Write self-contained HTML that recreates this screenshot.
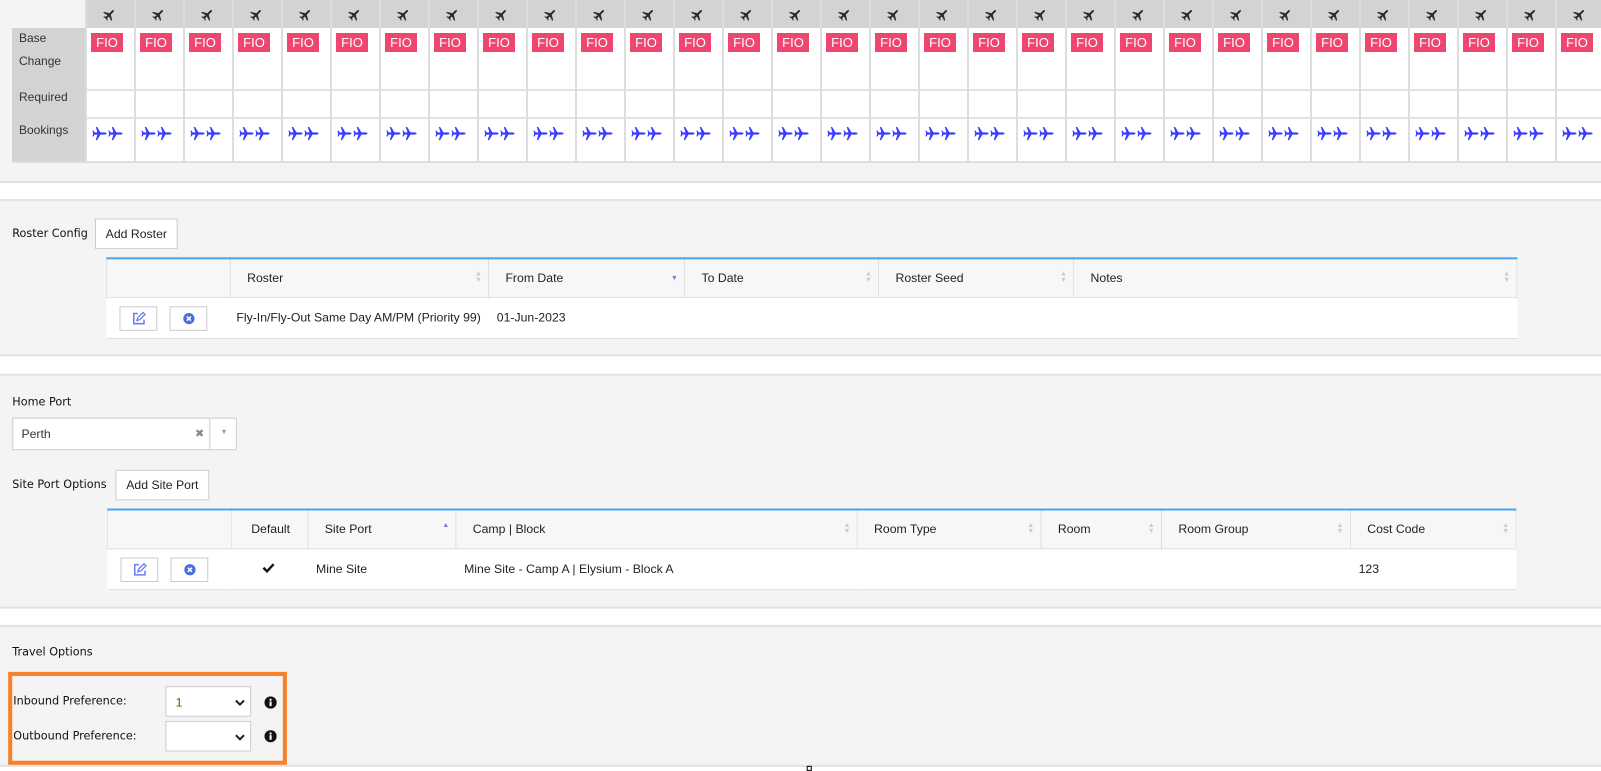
<!DOCTYPE html>
<html><head><meta charset="utf-8"><style>
*{box-sizing:border-box;margin:0;padding:0}
body{width:1601px;height:769px;overflow:hidden;background:#fff;font-family:"Liberation Sans",Arial,sans-serif;font-size:12px;color:#222;position:relative}
.sec{position:absolute;left:0;width:1568px;background:#f4f4f4;border-top:2px solid #e2e2e2;border-bottom:2px solid #e2e2e2}
.lbl{position:absolute;font-family:"DejaVu Sans",sans-serif;font-size:11px;color:#111}
.grid{position:absolute;left:12px;top:0;width:1589px;height:163px;overflow:hidden;display:flex;border-bottom:2px solid #ddd}
.lab{width:73px;flex:none;background:#d3d3d3;margin-top:28px;height:135px;position:relative;font-size:12px;color:#333}
.lab div{position:absolute;left:7px}
.col{width:49px;flex:none;border-left:2px solid #ddd;background:#fff;position:relative;height:163px}
.col .h{height:28px;background:#d3d3d3;position:relative;overflow:hidden}
.col .h i{position:absolute;left:10px;top:-11px;font-style:normal;font-weight:bold;font-size:12px;color:#222;letter-spacing:1px}
.col .h svg{position:absolute;left:16px;top:8px}
.col .b{height:63px;border-bottom:2px solid #e2e2e2;position:relative}
.col .b span{position:absolute;left:4px;top:5px;background:#ee466f;color:#fff;font-size:13px;padding:1px 0;line-height:17px;width:32px;text-align:center}
.col .r{height:28px;border-bottom:2px solid #e2e2e2}
.col .k{position:relative}
.col .k svg{position:absolute;top:7px}
.btn{position:absolute;background:#fff;border:1px solid #ccc;font-size:12px;color:#222;text-align:center}
table{position:absolute;border-collapse:collapse;background:#fff;border-top:2px solid #4aa3ef;table-layout:fixed}
th{background:#f7f7f7;font-weight:normal;text-align:left;font-size:12px;color:#222;border:1px solid #ddd;border-top:none;padding-left:16px;position:relative}
td{font-size:12px;color:#222;padding-left:8px;border-bottom:1px solid #ddd;position:relative}
.s{position:absolute;right:6px;top:12px;color:#ccc;font-size:7px;line-height:6px}
.ib{position:absolute;width:37px;height:24px;border:1px solid #ccc;background:#fff;top:8px}
.sel{position:absolute;background:#fff;border:1px solid #ccc;width:84px;height:30px;font-size:12px}
</style></head><body>
<svg width="0" height="0" style="position:absolute"><defs><path id="pl" d="M15.5 8 C15.5 7 14 6.8 12 6.8 L9 6.8 L5.5 1 L4 1 L5.8 6.8 L2.8 6.8 L1.5 4.8 L0.5 4.8 L1.2 8 L0.5 11.2 L1.5 11.2 L2.8 9.2 L5.8 9.2 L4 15 L5.5 15 L9 9.2 L12 9.2 C14 9.2 15.5 9 15.5 8Z"/></defs></svg>

<div style="position:absolute;left:0;top:-2px;width:1601px;height:185px;background:#f4f4f4;border-bottom:2px solid #e2e2e2"></div>
<div class="grid">
<div class="lab"><div style="top:3px">Base</div><div style="top:26px">Change</div><div style="top:62px">Required</div><div style="top:95px">Bookings</div></div>
<div class="col"><div class="h"><i>Fri</i><svg width="13" height="13" viewBox="0 0 16 16" style="transform:rotate(-45deg)"><use href="#pl" fill="#2a2a2a"/></svg></div><div class="b"><span>FIO</span></div><div class="r"></div><div class="k"><svg width="15" height="15" viewBox="0 0 16 16" style="left:5px"><use href="#pl" fill="#3c3cff"/></svg><svg width="15" height="15" viewBox="0 0 16 16" style="left:21px"><use href="#pl" fill="#3c3cff"/></svg></div></div>
<div class="col"><div class="h"><i>Fri</i><svg width="13" height="13" viewBox="0 0 16 16" style="transform:rotate(-45deg)"><use href="#pl" fill="#2a2a2a"/></svg></div><div class="b"><span>FIO</span></div><div class="r"></div><div class="k"><svg width="15" height="15" viewBox="0 0 16 16" style="left:5px"><use href="#pl" fill="#3c3cff"/></svg><svg width="15" height="15" viewBox="0 0 16 16" style="left:21px"><use href="#pl" fill="#3c3cff"/></svg></div></div>
<div class="col"><div class="h"><i>Fri</i><svg width="13" height="13" viewBox="0 0 16 16" style="transform:rotate(-45deg)"><use href="#pl" fill="#2a2a2a"/></svg></div><div class="b"><span>FIO</span></div><div class="r"></div><div class="k"><svg width="15" height="15" viewBox="0 0 16 16" style="left:5px"><use href="#pl" fill="#3c3cff"/></svg><svg width="15" height="15" viewBox="0 0 16 16" style="left:21px"><use href="#pl" fill="#3c3cff"/></svg></div></div>
<div class="col"><div class="h"><i>Fri</i><svg width="13" height="13" viewBox="0 0 16 16" style="transform:rotate(-45deg)"><use href="#pl" fill="#2a2a2a"/></svg></div><div class="b"><span>FIO</span></div><div class="r"></div><div class="k"><svg width="15" height="15" viewBox="0 0 16 16" style="left:5px"><use href="#pl" fill="#3c3cff"/></svg><svg width="15" height="15" viewBox="0 0 16 16" style="left:21px"><use href="#pl" fill="#3c3cff"/></svg></div></div>
<div class="col"><div class="h"><i>Fri</i><svg width="13" height="13" viewBox="0 0 16 16" style="transform:rotate(-45deg)"><use href="#pl" fill="#2a2a2a"/></svg></div><div class="b"><span>FIO</span></div><div class="r"></div><div class="k"><svg width="15" height="15" viewBox="0 0 16 16" style="left:5px"><use href="#pl" fill="#3c3cff"/></svg><svg width="15" height="15" viewBox="0 0 16 16" style="left:21px"><use href="#pl" fill="#3c3cff"/></svg></div></div>
<div class="col"><div class="h"><i>Fri</i><svg width="13" height="13" viewBox="0 0 16 16" style="transform:rotate(-45deg)"><use href="#pl" fill="#2a2a2a"/></svg></div><div class="b"><span>FIO</span></div><div class="r"></div><div class="k"><svg width="15" height="15" viewBox="0 0 16 16" style="left:5px"><use href="#pl" fill="#3c3cff"/></svg><svg width="15" height="15" viewBox="0 0 16 16" style="left:21px"><use href="#pl" fill="#3c3cff"/></svg></div></div>
<div class="col"><div class="h"><i>Fri</i><svg width="13" height="13" viewBox="0 0 16 16" style="transform:rotate(-45deg)"><use href="#pl" fill="#2a2a2a"/></svg></div><div class="b"><span>FIO</span></div><div class="r"></div><div class="k"><svg width="15" height="15" viewBox="0 0 16 16" style="left:5px"><use href="#pl" fill="#3c3cff"/></svg><svg width="15" height="15" viewBox="0 0 16 16" style="left:21px"><use href="#pl" fill="#3c3cff"/></svg></div></div>
<div class="col"><div class="h"><i>Fri</i><svg width="13" height="13" viewBox="0 0 16 16" style="transform:rotate(-45deg)"><use href="#pl" fill="#2a2a2a"/></svg></div><div class="b"><span>FIO</span></div><div class="r"></div><div class="k"><svg width="15" height="15" viewBox="0 0 16 16" style="left:5px"><use href="#pl" fill="#3c3cff"/></svg><svg width="15" height="15" viewBox="0 0 16 16" style="left:21px"><use href="#pl" fill="#3c3cff"/></svg></div></div>
<div class="col"><div class="h"><i>Fri</i><svg width="13" height="13" viewBox="0 0 16 16" style="transform:rotate(-45deg)"><use href="#pl" fill="#2a2a2a"/></svg></div><div class="b"><span>FIO</span></div><div class="r"></div><div class="k"><svg width="15" height="15" viewBox="0 0 16 16" style="left:5px"><use href="#pl" fill="#3c3cff"/></svg><svg width="15" height="15" viewBox="0 0 16 16" style="left:21px"><use href="#pl" fill="#3c3cff"/></svg></div></div>
<div class="col"><div class="h"><i>Fri</i><svg width="13" height="13" viewBox="0 0 16 16" style="transform:rotate(-45deg)"><use href="#pl" fill="#2a2a2a"/></svg></div><div class="b"><span>FIO</span></div><div class="r"></div><div class="k"><svg width="15" height="15" viewBox="0 0 16 16" style="left:5px"><use href="#pl" fill="#3c3cff"/></svg><svg width="15" height="15" viewBox="0 0 16 16" style="left:21px"><use href="#pl" fill="#3c3cff"/></svg></div></div>
<div class="col"><div class="h"><i>Fri</i><svg width="13" height="13" viewBox="0 0 16 16" style="transform:rotate(-45deg)"><use href="#pl" fill="#2a2a2a"/></svg></div><div class="b"><span>FIO</span></div><div class="r"></div><div class="k"><svg width="15" height="15" viewBox="0 0 16 16" style="left:5px"><use href="#pl" fill="#3c3cff"/></svg><svg width="15" height="15" viewBox="0 0 16 16" style="left:21px"><use href="#pl" fill="#3c3cff"/></svg></div></div>
<div class="col"><div class="h"><i>Fri</i><svg width="13" height="13" viewBox="0 0 16 16" style="transform:rotate(-45deg)"><use href="#pl" fill="#2a2a2a"/></svg></div><div class="b"><span>FIO</span></div><div class="r"></div><div class="k"><svg width="15" height="15" viewBox="0 0 16 16" style="left:5px"><use href="#pl" fill="#3c3cff"/></svg><svg width="15" height="15" viewBox="0 0 16 16" style="left:21px"><use href="#pl" fill="#3c3cff"/></svg></div></div>
<div class="col"><div class="h"><i>Fri</i><svg width="13" height="13" viewBox="0 0 16 16" style="transform:rotate(-45deg)"><use href="#pl" fill="#2a2a2a"/></svg></div><div class="b"><span>FIO</span></div><div class="r"></div><div class="k"><svg width="15" height="15" viewBox="0 0 16 16" style="left:5px"><use href="#pl" fill="#3c3cff"/></svg><svg width="15" height="15" viewBox="0 0 16 16" style="left:21px"><use href="#pl" fill="#3c3cff"/></svg></div></div>
<div class="col"><div class="h"><i>Fri</i><svg width="13" height="13" viewBox="0 0 16 16" style="transform:rotate(-45deg)"><use href="#pl" fill="#2a2a2a"/></svg></div><div class="b"><span>FIO</span></div><div class="r"></div><div class="k"><svg width="15" height="15" viewBox="0 0 16 16" style="left:5px"><use href="#pl" fill="#3c3cff"/></svg><svg width="15" height="15" viewBox="0 0 16 16" style="left:21px"><use href="#pl" fill="#3c3cff"/></svg></div></div>
<div class="col"><div class="h"><i>Fri</i><svg width="13" height="13" viewBox="0 0 16 16" style="transform:rotate(-45deg)"><use href="#pl" fill="#2a2a2a"/></svg></div><div class="b"><span>FIO</span></div><div class="r"></div><div class="k"><svg width="15" height="15" viewBox="0 0 16 16" style="left:5px"><use href="#pl" fill="#3c3cff"/></svg><svg width="15" height="15" viewBox="0 0 16 16" style="left:21px"><use href="#pl" fill="#3c3cff"/></svg></div></div>
<div class="col"><div class="h"><i>Mon</i><svg width="13" height="13" viewBox="0 0 16 16" style="transform:rotate(-45deg)"><use href="#pl" fill="#2a2a2a"/></svg></div><div class="b"><span>FIO</span></div><div class="r"></div><div class="k"><svg width="15" height="15" viewBox="0 0 16 16" style="left:5px"><use href="#pl" fill="#3c3cff"/></svg><svg width="15" height="15" viewBox="0 0 16 16" style="left:21px"><use href="#pl" fill="#3c3cff"/></svg></div></div>
<div class="col"><div class="h"><i>Mon</i><svg width="13" height="13" viewBox="0 0 16 16" style="transform:rotate(-45deg)"><use href="#pl" fill="#2a2a2a"/></svg></div><div class="b"><span>FIO</span></div><div class="r"></div><div class="k"><svg width="15" height="15" viewBox="0 0 16 16" style="left:5px"><use href="#pl" fill="#3c3cff"/></svg><svg width="15" height="15" viewBox="0 0 16 16" style="left:21px"><use href="#pl" fill="#3c3cff"/></svg></div></div>
<div class="col"><div class="h"><i>Mon</i><svg width="13" height="13" viewBox="0 0 16 16" style="transform:rotate(-45deg)"><use href="#pl" fill="#2a2a2a"/></svg></div><div class="b"><span>FIO</span></div><div class="r"></div><div class="k"><svg width="15" height="15" viewBox="0 0 16 16" style="left:5px"><use href="#pl" fill="#3c3cff"/></svg><svg width="15" height="15" viewBox="0 0 16 16" style="left:21px"><use href="#pl" fill="#3c3cff"/></svg></div></div>
<div class="col"><div class="h"><i>Mon</i><svg width="13" height="13" viewBox="0 0 16 16" style="transform:rotate(-45deg)"><use href="#pl" fill="#2a2a2a"/></svg></div><div class="b"><span>FIO</span></div><div class="r"></div><div class="k"><svg width="15" height="15" viewBox="0 0 16 16" style="left:5px"><use href="#pl" fill="#3c3cff"/></svg><svg width="15" height="15" viewBox="0 0 16 16" style="left:21px"><use href="#pl" fill="#3c3cff"/></svg></div></div>
<div class="col"><div class="h"><i>Mon</i><svg width="13" height="13" viewBox="0 0 16 16" style="transform:rotate(-45deg)"><use href="#pl" fill="#2a2a2a"/></svg></div><div class="b"><span>FIO</span></div><div class="r"></div><div class="k"><svg width="15" height="15" viewBox="0 0 16 16" style="left:5px"><use href="#pl" fill="#3c3cff"/></svg><svg width="15" height="15" viewBox="0 0 16 16" style="left:21px"><use href="#pl" fill="#3c3cff"/></svg></div></div>
<div class="col"><div class="h"><i>Mon</i><svg width="13" height="13" viewBox="0 0 16 16" style="transform:rotate(-45deg)"><use href="#pl" fill="#2a2a2a"/></svg></div><div class="b"><span>FIO</span></div><div class="r"></div><div class="k"><svg width="15" height="15" viewBox="0 0 16 16" style="left:5px"><use href="#pl" fill="#3c3cff"/></svg><svg width="15" height="15" viewBox="0 0 16 16" style="left:21px"><use href="#pl" fill="#3c3cff"/></svg></div></div>
<div class="col"><div class="h"><i>Mon</i><svg width="13" height="13" viewBox="0 0 16 16" style="transform:rotate(-45deg)"><use href="#pl" fill="#2a2a2a"/></svg></div><div class="b"><span>FIO</span></div><div class="r"></div><div class="k"><svg width="15" height="15" viewBox="0 0 16 16" style="left:5px"><use href="#pl" fill="#3c3cff"/></svg><svg width="15" height="15" viewBox="0 0 16 16" style="left:21px"><use href="#pl" fill="#3c3cff"/></svg></div></div>
<div class="col"><div class="h"><i>Mon</i><svg width="13" height="13" viewBox="0 0 16 16" style="transform:rotate(-45deg)"><use href="#pl" fill="#2a2a2a"/></svg></div><div class="b"><span>FIO</span></div><div class="r"></div><div class="k"><svg width="15" height="15" viewBox="0 0 16 16" style="left:5px"><use href="#pl" fill="#3c3cff"/></svg><svg width="15" height="15" viewBox="0 0 16 16" style="left:21px"><use href="#pl" fill="#3c3cff"/></svg></div></div>
<div class="col"><div class="h"><i>Mon</i><svg width="13" height="13" viewBox="0 0 16 16" style="transform:rotate(-45deg)"><use href="#pl" fill="#2a2a2a"/></svg></div><div class="b"><span>FIO</span></div><div class="r"></div><div class="k"><svg width="15" height="15" viewBox="0 0 16 16" style="left:5px"><use href="#pl" fill="#3c3cff"/></svg><svg width="15" height="15" viewBox="0 0 16 16" style="left:21px"><use href="#pl" fill="#3c3cff"/></svg></div></div>
<div class="col"><div class="h"><i>Mon</i><svg width="13" height="13" viewBox="0 0 16 16" style="transform:rotate(-45deg)"><use href="#pl" fill="#2a2a2a"/></svg></div><div class="b"><span>FIO</span></div><div class="r"></div><div class="k"><svg width="15" height="15" viewBox="0 0 16 16" style="left:5px"><use href="#pl" fill="#3c3cff"/></svg><svg width="15" height="15" viewBox="0 0 16 16" style="left:21px"><use href="#pl" fill="#3c3cff"/></svg></div></div>
<div class="col"><div class="h"><i>Mon</i><svg width="13" height="13" viewBox="0 0 16 16" style="transform:rotate(-45deg)"><use href="#pl" fill="#2a2a2a"/></svg></div><div class="b"><span>FIO</span></div><div class="r"></div><div class="k"><svg width="15" height="15" viewBox="0 0 16 16" style="left:5px"><use href="#pl" fill="#3c3cff"/></svg><svg width="15" height="15" viewBox="0 0 16 16" style="left:21px"><use href="#pl" fill="#3c3cff"/></svg></div></div>
<div class="col"><div class="h"><i>Mon</i><svg width="13" height="13" viewBox="0 0 16 16" style="transform:rotate(-45deg)"><use href="#pl" fill="#2a2a2a"/></svg></div><div class="b"><span>FIO</span></div><div class="r"></div><div class="k"><svg width="15" height="15" viewBox="0 0 16 16" style="left:5px"><use href="#pl" fill="#3c3cff"/></svg><svg width="15" height="15" viewBox="0 0 16 16" style="left:21px"><use href="#pl" fill="#3c3cff"/></svg></div></div>
<div class="col"><div class="h"><i>Mon</i><svg width="13" height="13" viewBox="0 0 16 16" style="transform:rotate(-45deg)"><use href="#pl" fill="#2a2a2a"/></svg></div><div class="b"><span>FIO</span></div><div class="r"></div><div class="k"><svg width="15" height="15" viewBox="0 0 16 16" style="left:5px"><use href="#pl" fill="#3c3cff"/></svg><svg width="15" height="15" viewBox="0 0 16 16" style="left:21px"><use href="#pl" fill="#3c3cff"/></svg></div></div>
<div class="col"><div class="h"><i>Mon</i><svg width="13" height="13" viewBox="0 0 16 16" style="transform:rotate(-45deg)"><use href="#pl" fill="#2a2a2a"/></svg></div><div class="b"><span>FIO</span></div><div class="r"></div><div class="k"><svg width="15" height="15" viewBox="0 0 16 16" style="left:5px"><use href="#pl" fill="#3c3cff"/></svg><svg width="15" height="15" viewBox="0 0 16 16" style="left:21px"><use href="#pl" fill="#3c3cff"/></svg></div></div>
<div class="col"><div class="h"><i>Mon</i><svg width="13" height="13" viewBox="0 0 16 16" style="transform:rotate(-45deg)"><use href="#pl" fill="#2a2a2a"/></svg></div><div class="b"><span>FIO</span></div><div class="r"></div><div class="k"><svg width="15" height="15" viewBox="0 0 16 16" style="left:5px"><use href="#pl" fill="#3c3cff"/></svg><svg width="15" height="15" viewBox="0 0 16 16" style="left:21px"><use href="#pl" fill="#3c3cff"/></svg></div></div>
<div class="col"><div class="h"><i>Mon</i><svg width="13" height="13" viewBox="0 0 16 16" style="transform:rotate(-45deg)"><use href="#pl" fill="#2a2a2a"/></svg></div><div class="b"><span>FIO</span></div><div class="r"></div><div class="k"><svg width="15" height="15" viewBox="0 0 16 16" style="left:5px"><use href="#pl" fill="#3c3cff"/></svg><svg width="15" height="15" viewBox="0 0 16 16" style="left:21px"><use href="#pl" fill="#3c3cff"/></svg></div></div>
<div class="col"><div class="h"><i>Mon</i><svg width="13" height="13" viewBox="0 0 16 16" style="transform:rotate(-45deg)"><use href="#pl" fill="#2a2a2a"/></svg></div><div class="b"><span>FIO</span></div><div class="r"></div><div class="k"><svg width="15" height="15" viewBox="0 0 16 16" style="left:5px"><use href="#pl" fill="#3c3cff"/></svg><svg width="15" height="15" viewBox="0 0 16 16" style="left:21px"><use href="#pl" fill="#3c3cff"/></svg></div></div>
<div class="col"><div class="h"><i>Mon</i><svg width="13" height="13" viewBox="0 0 16 16" style="transform:rotate(-45deg)"><use href="#pl" fill="#2a2a2a"/></svg></div><div class="b"><span>FIO</span></div><div class="r"></div><div class="k"><svg width="15" height="15" viewBox="0 0 16 16" style="left:5px"><use href="#pl" fill="#3c3cff"/></svg><svg width="15" height="15" viewBox="0 0 16 16" style="left:21px"><use href="#pl" fill="#3c3cff"/></svg></div></div>
</div>

<div style="position:absolute;left:0;top:0;width:1568px;height:753px;transform:scale(1.0211);transform-origin:0 0">
<div class="sec" style="top:195px;height:154px"></div>
<div class="lbl" style="left:12px;top:222px">Roster Config</div>
<div class="btn" style="left:93px;top:214px;width:81px;height:30px;line-height:28px">Add Roster</div>
<table style="left:104px;top:252px;width:1382px">
<colgroup><col style="width:121px"><col style="width:253px"><col style="width:192px"><col style="width:190px"><col style="width:191px"><col></colgroup>
<tr style="height:38px"><th></th><th>Roster<span class="s">▲<br>▼</span></th><th>From Date<span class="s" style="color:#7b7fd6;top:16px">▼</span></th><th>To Date<span class="s">▲<br>▼</span></th><th>Roster Seed<span class="s">▲<br>▼</span></th><th>Notes<span class="s">▲<br>▼</span></th></tr>
<tr style="height:40px"><td><div class="ib" style="left:12px"><svg width="14" height="14" viewBox="0 0 14 14" style="position:absolute;left:11px;top:4px"><path d="M6 2H2v10h10V8" fill="none" stroke="#6a7df0" stroke-width="1.5"/><path d="M5 9l1-3 5-5 2 2-5 5z" fill="none" stroke="#6a7df0" stroke-width="1.3"/></svg></div><div class="ib" style="left:61px"><svg width="12" height="12" viewBox="0 0 12 12" style="position:absolute;left:12px;top:5px"><circle cx="6" cy="6" r="5.5" fill="#4a6ee0"/><path d="M4 4l4 4M8 4l-4 4" stroke="#fff" stroke-width="1.6"/></svg></div></td><td style="padding-left:6px">Fly-In/Fly-Out Same Day AM/PM (Priority 99)</td><td>01-Jun-2023</td><td></td><td></td><td></td></tr>
</table>

<div class="sec" style="top:366px;height:230px"></div>
<div class="lbl" style="left:12px;top:387px">Home Port</div>
<div style="position:absolute;left:12px;top:409px;width:220px;height:32px;background:#fff;border:1px solid #ccc">
<span style="position:absolute;left:8px;top:8px;color:#333">Perth</span>
<span style="position:absolute;left:178px;top:8px;color:#888;font-size:11px">✖</span>
<div style="position:absolute;left:192px;top:0;width:1px;height:30px;background:#ccc"></div>
<span style="position:absolute;left:203px;top:10px;color:#999;font-size:7px">▼</span></div>
<div class="lbl" style="left:12px;top:468px">Site Port Options</div>
<div class="btn" style="left:113px;top:460px;width:92px;height:30px;line-height:28px">Add Site Port</div>
<table style="left:105px;top:498px;width:1380px">
<colgroup><col style="width:121px"><col style="width:75px"><col style="width:145px"><col style="width:393px"><col style="width:180px"><col style="width:118px"><col style="width:185px"><col></colgroup>
<tr style="height:38px"><th></th><th style="padding-left:19px">Default</th><th>Site Port<span class="s" style="color:#7b7fd6;top:12px">▲</span></th><th>Camp | Block<span class="s">▲<br>▼</span></th><th>Room Type<span class="s">▲<br>▼</span></th><th>Room<span class="s">▲<br>▼</span></th><th>Room Group<span class="s">▲<br>▼</span></th><th>Cost Code<span class="s">▲<br>▼</span></th></tr>
<tr style="height:40px"><td><div class="ib" style="left:12px"><svg width="14" height="14" viewBox="0 0 14 14" style="position:absolute;left:11px;top:4px"><path d="M6 2H2v10h10V8" fill="none" stroke="#6a7df0" stroke-width="1.5"/><path d="M5 9l1-3 5-5 2 2-5 5z" fill="none" stroke="#6a7df0" stroke-width="1.3"/></svg></div><div class="ib" style="left:61px"><svg width="12" height="12" viewBox="0 0 12 12" style="position:absolute;left:12px;top:5px"><circle cx="6" cy="6" r="5.5" fill="#4a6ee0"/><path d="M4 4l4 4M8 4l-4 4" stroke="#fff" stroke-width="1.6"/></svg></div></td><td style="padding-left:30px"><svg width="12" height="10" viewBox="0 0 12 10"><path d="M1 5l3.5 3.5L11 1.5" fill="none" stroke="#111" stroke-width="2.4"/></svg></td><td>Mine Site</td><td>Mine Site - Camp A | Elysium - Block A</td><td></td><td></td><td></td><td>123</td></tr>
</table>

<div class="sec" style="top:612px;height:139px"></div>
<div class="lbl" style="left:12px;top:632px">Travel Options</div>
<div style="position:absolute;left:8px;top:658px;width:273px;height:91px;border:4px solid #f5822a"></div>
<div class="lbl" style="left:13px;top:680px">Inbound Preference:</div>
<div class="sel" style="left:162px;top:672px"><span style="position:absolute;left:9px;top:8px;color:#7a4a00">1</span><svg width="10" height="7" viewBox="0 0 10 7" style="position:absolute;left:67px;top:12px"><path d="M1 1l4 4 4-4" fill="none" stroke="#222" stroke-width="2"/></svg></div>
<svg width="12" height="12" viewBox="0 0 12 12" style="position:absolute;left:259px;top:682px"><circle cx="6" cy="6" r="6" fill="#111"/><rect x="5" y="5" width="2" height="4.5" fill="#fff"/><circle cx="6" cy="3.3" r="1.1" fill="#fff"/></svg>
<div class="lbl" style="left:13px;top:714px">Outbound Preference:</div>
<div class="sel" style="left:162px;top:706px"><svg width="10" height="7" viewBox="0 0 10 7" style="position:absolute;left:67px;top:12px"><path d="M1 1l4 4 4-4" fill="none" stroke="#222" stroke-width="2"/></svg></div>
<svg width="12" height="12" viewBox="0 0 12 12" style="position:absolute;left:259px;top:715px"><circle cx="6" cy="6" r="6" fill="#111"/><rect x="5" y="5" width="2" height="4.5" fill="#fff"/><circle cx="6" cy="3.3" r="1.1" fill="#fff"/></svg>
<div style="position:absolute;left:790px;top:750px;width:5px;height:5px;border:1px solid #000;background:#fff"></div>
</div>
</body></html>
